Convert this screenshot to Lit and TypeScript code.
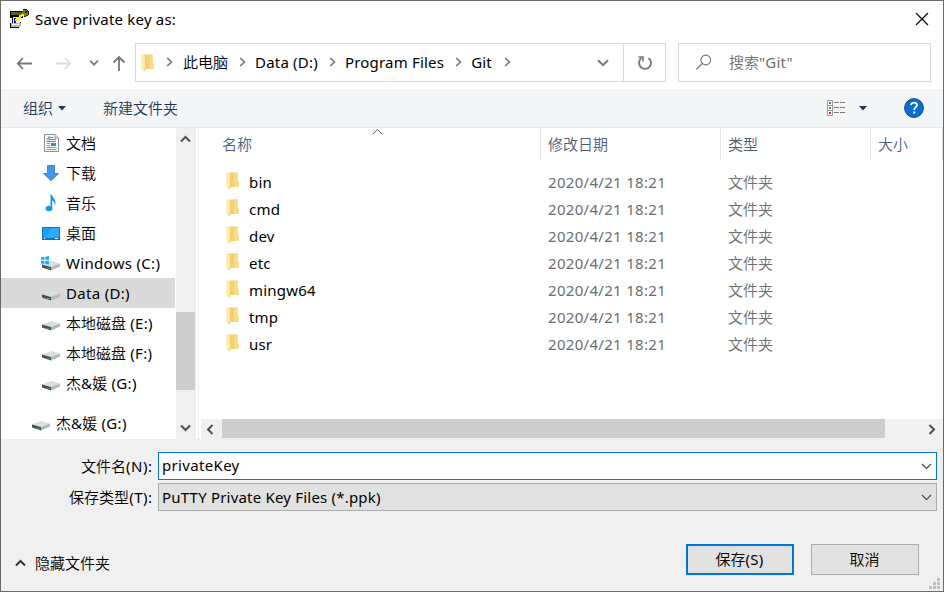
import { LitElement, html, svg, css } from "lit";
import { customElement } from "lit/decorators.js";
import { classMap } from "lit/directives/class-map.js";

// Splits a label into Latin and CJK runs so each can carry its own metrics.
const label = (s: string) =>
  (s.match(/[\u2e80-\u9fff]+|[^\u2e80-\u9fff]+/g) ?? []).map((run) =>
    /[\u2e80-\u9fff]/.test(run) ? html`<span class="cjk">${run}</span>` : html`<span class="lat">${run}</span>`
  );

const icon = (w: number, h: number, body: unknown) =>
  html`<svg width=${w} height=${h} viewBox="0 0 ${w} ${h}">${body}</svg>`;

const line = (w: number, h: number, d: string, color: string, sw: number) =>
  icon(w, h, svg`<path d=${d} fill="none" stroke=${color} stroke-width=${sw}/>`);

const folder = icon(13, 18, svg`
  <path d="M3 0.5H11.5V9L12.5 9.5V15H3Z" fill="#f3d070"/>
  <path d="M8 0.5H11.5V9L12.5 9.5V15H8Z" fill="#f9dc80"/>
  <path d="M0.5 0.5H2L4.5 2.5V16.5L3 17.5L0.5 15.5Z" fill="#ffe9a6"/>
  <path d="M4.5 2.5V15H3.5V17" fill="none" stroke="#edc964" stroke-width=".6"/>`);

const driveBody = svg`
  <path d="M1 11.5L10 8L19 10.5L10 14Z" fill="#dcdddf"/>
  <path d="M1 11.5L10 14V17.5L1 14.5Z" fill="#4c4f50"/>
  <path d="M10 14L19 10.5V13.5L10 17.5Z" fill="#b4b6b8"/>
  <path d="M6 14.8L8.5 15.6V16.6L6 15.8Z" fill="#27c93a"/>`;

const icons: Record<string, unknown> = {
  doc: icon(20, 20, svg`
    <path d="M3.5 1.5H14L17.5 5V18.5H3.5Z" fill="#fafafa" stroke="#8c8f91"/>
    <path d="M14 1.5V5H17.5" fill="#ddd" stroke="#8c8f91" stroke-width=".8"/>
    <path d="M8.5 4.5H12M8 6.5H15M5.5 8.5H15" stroke="#3b97dc"/>
    <path d="M5.5 7.5L8 3.5V7.5" stroke="#3b97dc" fill="none"/>
    <path d="M5.5 10.5H9M5.5 12.5H9M5.5 14.5H15.5M5.5 16.5H15.5" stroke="#9a9a9a"/>
    <rect x="10" y="10" width="5" height="3" fill="#418dbd"/>`),
  down: icon(20, 20, svg`<path d="M6.5 2.5H13.5V10.5H17.5L10 17.7L2.5 10.5H6.5Z" fill="#3f98e5" stroke="#2779c3" stroke-width=".8"/>`),
  music: icon(20, 20, svg`
    <ellipse cx="8" cy="15.5" rx="3.4" ry="2.8" fill="#1296f0"/>
    <path d="M9.5 15V1.5H11C11.2 5 15.5 6 14.3 11.5H13.4C13.8 9 12.7 8 11.2 7.4V15.5Z" fill="#1296f0"/>`),
  desk: icon(20, 20, svg`
    <rect x="1.5" y="4.5" width="17" height="12" fill="#17a0fb" stroke="#0875bd"/>
    <path d="M12 5H18V13L7 15L6 12Z" fill="#48b4fc" opacity=".55"/>
    <path d="M2 15.5H18" stroke="#0b79c4"/><path d="M3 15.5H4M14 15.5H17" stroke="#fff"/>`),
  win: icon(20, 20, svg`${driveBody}
    <path d="M0 4.3L3.4 3.8V6.8H0ZM4.3 3.7L8 3.1V6.8H4.3ZM0 7.7H3.4V11L0 10.5ZM4.3 7.7H8V11.6L4.3 11.1Z" fill="#14b1f0"/>`),
  drive: icon(20, 20, driveBody),
};

const tree = [
  ["doc", "文档"], ["down", "下载"], ["music", "音乐"], ["desk", "桌面"], ["win", "Windows (C:)"],
  ["drive", "Data (D:)"], ["drive", "本地磁盘 (E:)"], ["drive", "本地磁盘 (F:)"], ["drive", "杰&媛 (G:)"],
];
const files = ["bin", "cmd", "dev", "etc", "mingw64", "tmp", "usr"];
const crumbs = ["此电脑", "Data (D:)", "Program Files", "Git"];

const puttyIcon = icon(21, 20, svg`
  <g shape-rendering="crispEdges">
    <path d="M1 2H14V9H11V13H12V18H10V19H1V14H3V9H1Z" fill="#000"/>
    <rect x="2" y="3" width="11" height="3" fill="#5f5e12"/>
    <rect x="4" y="8" width="7" height="6" fill="#e8e8e8"/>
    <rect x="5" y="9" width="4" height="5" fill="#1212e0"/>
    <path d="M7 12H8V10H10V14H7Z" fill="#fff"/>
    <path d="M2 14H12V18H2Z" fill="#b8b8b8"/>
    <path d="M3 15H10V16H3Z" fill="#f0f0f0"/>
    <path d="M14 0H18V1H19V2H20V6H19V7H17V8H15V7H13V2H14Z" fill="#1a1a00"/>
    <path d="M14 1H18V2H19V6H17V7H14V5H13V3H14Z" fill="#7c7a14"/>
    <rect x="16" y="2" width="2" height="2" fill="#222"/>
    <path d="M13 5H15V7H13V8H12V10H10V11H8V12H6V10H7V9H9V8H10V6H12V5Z" fill="#fff200"/>
  </g>`);

@customElement("app-root")
class AppRoot extends LitElement {
  static styles = css`
    :host {
      display: flex; flex-direction: column; box-sizing: border-box; width: 944px; height: 592px;
      border: 1px solid #6a6a6a; background: #fff; color: #000; overflow: hidden; position: relative;
      font: 15px/20px "Noto Sans", "Noto Sans CJK SC", sans-serif; white-space: nowrap;
    }
    * { box-sizing: border-box; }
    svg { display: block; flex: none; }
    .cjk { font-family: "Noto Sans CJK SC", sans-serif; font-weight: 350; }
    .lat { letter-spacing: .2px; }
    .node .lat, .date .lat { letter-spacing: .31px; }
    .text { display: block; height: 20px; line-height: 20px; }
    .title { display: flex; height: 42px; padding: 8px 14px 0 8px; }
    .title .text { margin: 0 0 0 5px; flex: 1; }
    .close { margin-top: 3px; }
    .nav { display: flex; height: 46px; align-items: flex-start; }
    .nav .text { margin-bottom: 2px; }
    .arrows { display: flex; width: 134px; height: 39px; padding-left: 15px; align-items: center; }
    .arrows svg:nth-child(2) { margin-left: 22px; }
    .arrows svg:nth-child(3) { margin-left: 17px; }
    .arrows svg:nth-child(4) { margin: 2px 0 0 13px; }
    .box { display: flex; align-items: center; height: 39px; border: 1px solid #d9d9d9; }
    .address { width: 531px; }
    .address > svg:first-child { margin-left: 5px; }
    .crumbs { display: flex; flex: 1; align-items: center; }
    .crumb { display: flex; align-items: center; }
    .sep { margin: 0 9px 2px 12px; }
    .crumb:first-child .sep { margin-right: 10px; }
    .crumb:nth-child(n+2) .sep { margin-left: 11px; }
    .drop { margin-right: 14px; }
    .refresh { width: 42px; height: 37px; border-left: 1px solid #d9d9d9; display: flex; align-items: center; justify-content: center; }
    .search { width: 253px; margin-left: 12px; padding-left: 16px; color: #6d6d6d; }
    .search .text { margin-left: 17px; }
    .tools { display: flex; height: 39px; background: #f4f5f7; border-bottom: 1px solid #e6e7e9; align-items: center; color: #1e395b; padding: 0 19px 0 22px; }
    .tools .caret { margin: 0 37px 0 5px; }
    .tools .grow { flex: 1; }
    .tools .caret2 { margin: 0 37px 0 14px; }
    .main { display: flex; height: 311px; }
    .tree { width: 174px; }
    .node { display: flex; height: 30px; align-items: center; padding-left: 40px; gap: 5px; }
    .node.sel { background: #d9d9d9; }
    .node.outer { padding-left: 30px; margin-top: 10px; }
    .vbar { width: 20px; margin-left: 1px; background: #f0f0f0; display: flex; flex-direction: column; align-items: center; padding: 7px 1px 7px 0; }
    .vthumb { width: 19px; height: 78px; background: #cdcdcd; margin: 169px 0 34px; }
    .list { flex: 1; margin-left: 2px; border-left: 1px solid #f0f0f0; display: flex; flex-direction: column; }
    .head { display: grid; grid-template-columns: 342px 180px 150px 1fr; height: 32px; color: #4c607a; position: relative; }
    .head div { border-right: 1px solid #e5e5e5; padding: 6px 0 0 7px; }
    .head div:first-child { padding-left: 23px; }
    .head div:last-child { border: 0; }
    .sort { position: absolute; left: 173px; top: 0; }
    .rows { flex: 1; padding-top: 8px; }
    .row { display: grid; grid-template-columns: 29px 299px 180px 1fr; height: 27px; align-items: center; padding-left: 21px; color: #6d6d6d; }
    .row > svg { margin: 0 0 1px 6px; }
    .row .name { color: #000; }
    .hbar { display: flex; height: 20px; margin-left: 2px; background: #f0f0f0; align-items: center; padding-left: 5px; }
    .hthumb { width: 663px; height: 19px; margin: 0 43px 1px 8px; background: #cdcdcd; }
    .bottom { flex: 1; background: #f0f0f0; padding: 13px 6px 0 0; }
    .field { display: grid; grid-template-columns: 152px 1fr; column-gap: 5px; margin-bottom: 3px; align-items: center; }
    .field > .text { text-align: right; padding-right: 1px; }
    .field > .text .lat { letter-spacing: .5px; margin-right: -.5px; }
    .combo { display: flex; height: 28px; align-items: center; justify-content: space-between; border: 1px solid #adadad; background: #e1e1e1; padding: 0 4px 0 3px; }
    .combo.focus { border-color: #0078d7; background: #fff; }
    .combo.focus .text { margin-bottom: 2px; }
    .combo.focus .lat { letter-spacing: .33px; }
    .foot { display: flex; padding: 30px 18px 0 14px; }
    .hide { display: flex; flex: 1; gap: 9px; align-items: center; height: 20px; margin-top: 9px; }
    .btn { width: 108px; height: 31px; border: 1px solid #adadad; background: #e1e1e1; display: flex; align-items: center; justify-content: center; margin-left: 17px; }
    .btn.primary { border: 2px solid #0078d7; }
    .btn .text { margin: 0 1px 2px 0; }
    .grip { position: absolute; right: 3px; bottom: 2px; }
  `;

  render() {
    return html`
      <div class="title">
        ${puttyIcon}<span class="text">${label("Save private key as:")}</span>
        <span class="close">${line(14, 14, "M1 1L13 13M13 1L1 13", "#000", 1.1)}</span>
      </div>
      <div class="nav">
        <div class="arrows">
          ${line(17, 14, "M16 7.5H2M7 2L1.8 7.5L7 13", "#777", 1.8)}
          ${line(17, 14, "M1 7.5H15M10 2L15.2 7.5L10 13", "#dcdcdc", 1.8)}
          ${line(10, 8, "M1 1.5L5 5.8L9 1.5", "#777", 1.8)}
          ${line(14, 17, "M7 16V2M1.5 7.5L7 2L12.5 7.5", "#777", 1.8)}
        </div>
        <div class="box address">
          ${folder}
          <div class="crumbs">
            ${crumbs.map((c) => html`<div class="crumb"><span class="sep">${line(7, 10, "M1.2 1L5.4 5L1.2 9", "#777", 1.7)}</span><span class="text">${label(c)}</span></div>`)}
            <span class="sep">${line(7, 10, "M1.2 1L5.4 5L1.2 9", "#777", 1.7)}</span>
          </div>
          <span class="drop">${line(12, 8, "M1 1.2L6 6.2L11 1.2", "#777", 2)}</span>
          <div class="refresh">${icon(16, 16, svg`
            <path d="M4.5 3A6 6 0 1 0 11.5 3" fill="none" stroke="#777" stroke-width="1.9"/>
            <path d="M1.5 2H6V6.5" fill="none" stroke="#777" stroke-width="1.6"/>`)}</div>
        </div>
        <div class="box search">
          ${icon(17, 17, svg`<circle cx="10.8" cy="6" r="4.9" fill="none" stroke="#777" stroke-width="1.1"/><path d="M7.3 9.5L1.2 15.5" stroke="#777" stroke-width="1.1"/>`)}
          <span class="text">${label('搜索"Git"')}</span>
        </div>
      </div>
      <div class="tools">
        <span class="text">${label("组织")}</span>
        <span class="caret">${icon(8, 5, svg`<path d="M0 0H8L4 4.5Z" fill="#1e395b"/>`)}</span>
        <span class="text grow">${label("新建文件夹")}</span>
        ${icon(18, 16, svg`
          <path d="M.5 .5H5.5V15.5H.5ZM.5 5.5H5.5M.5 10.5H5.5" fill="#fff" stroke="#9b9b9b"/>
          <rect x="2" y="2" width="2" height="2" fill="#3a78b4"/><rect x="2" y="7" width="2" height="2" fill="#7c7d2a"/><rect x="2" y="12" width="2" height="2" fill="#c8321e"/>
          <path d="M7 2.5H12M13 2.5H18M7 7.5H12M13 7.5H18M7 12.5H12M13 12.5H18" stroke="#7d7d7d"/>`)}
        <span class="caret2">${icon(8, 5, svg`<path d="M0 0H8L4 4.5Z" fill="#1e395b"/>`)}</span>
        ${icon(20, 20, svg`<circle cx="10" cy="10" r="9.4" fill="#0a6cce" stroke="#0a4a92"/>
          <path d="M7 7.2C7 3.8 13.2 3.9 13 7.2C12.9 9.2 10.2 9.3 10.2 12" fill="none" stroke="#fff" stroke-width="1.8"/><rect x="9.2" y="13.5" width="2" height="2" fill="#fff"/>`)}
      </div>
      <div class="main">
        <div class="tree">
          ${tree.map(([k, t]) => html`<div class=${classMap({ node: true, sel: t === "Data (D:)" })}>${icons[k]}<span class="text">${label(t)}</span></div>`)}
          <div class="node outer">${icons.drive}<span class="text">${label("杰&媛 (G:)")}</span></div>
        </div>
        <div class="vbar">
          ${line(11, 8, "M1 6.5L5.5 2L10 6.5", "#505050", 2)}
          <div class="vthumb"></div>
          ${line(11, 8, "M1 1.5L5.5 6L10 1.5", "#505050", 2)}
        </div>
        <div class="list">
          <div class="head">
            <div>${label("名称")}</div><div>${label("修改日期")}</div><div>${label("类型")}</div><div>${label("大小")}</div>
            <span class="sort">${line(11, 7, "M1 6L5.5 1.5L10 6", "#606060", 1)}</span>
          </div>
          <div class="rows">
            ${files.map((f) => html`<div class="row">${folder}<span class="text name">${label(f)}</span><span class="text date">${label("2020/4/21 18:21")}</span><span class="text">${label("文件夹")}</span></div>`)}
          </div>
          <div class="hbar">
            ${line(8, 11, "M6.5 1L2 5.5L6.5 10", "#505050", 2)}
            <div class="hthumb"></div>
            ${line(8, 11, "M1.5 1L6 5.5L1.5 10", "#505050", 2)}
          </div>
        </div>
      </div>
      <div class="bottom">
        <div class="field"><span class="text">${label("文件名(N):")}</span>
          <div class="combo focus"><span class="text">${label("privateKey")}</span>${line(11, 7, "M1 1L5.5 5.5L10 1", "#444", 1.1)}</div></div>
        <div class="field"><span class="text">${label("保存类型(T):")}</span>
          <div class="combo"><span class="text">${label("PuTTY Private Key Files (*.ppk)")}</span>${line(11, 7, "M1 1L5.5 5.5L10 1", "#444", 1.1)}</div></div>
        <div class="foot">
          <div class="hide">${line(11, 8, "M1 6.5L5.5 2L10 6.5", "#333", 2)}<span class="text">${label("隐藏文件夹")}</span></div>
          <div class="btn primary"><span class="text">${label("保存(S)")}</span></div>
          <div class="btn"><span class="text">${label("取消")}</span></div>
        </div>
      </div>
      <span class="grip">${icon(11, 11, svg`<path d="M8 0h3v3h-3zM4 4h3v3h-3zM8 4h3v3h-3zM0 8h3v3h-3zM4 8h3v3h-3zM8 8h3v3h-3z" fill="#bfbfbf"/>`)}</span>
    `;
  }
}
